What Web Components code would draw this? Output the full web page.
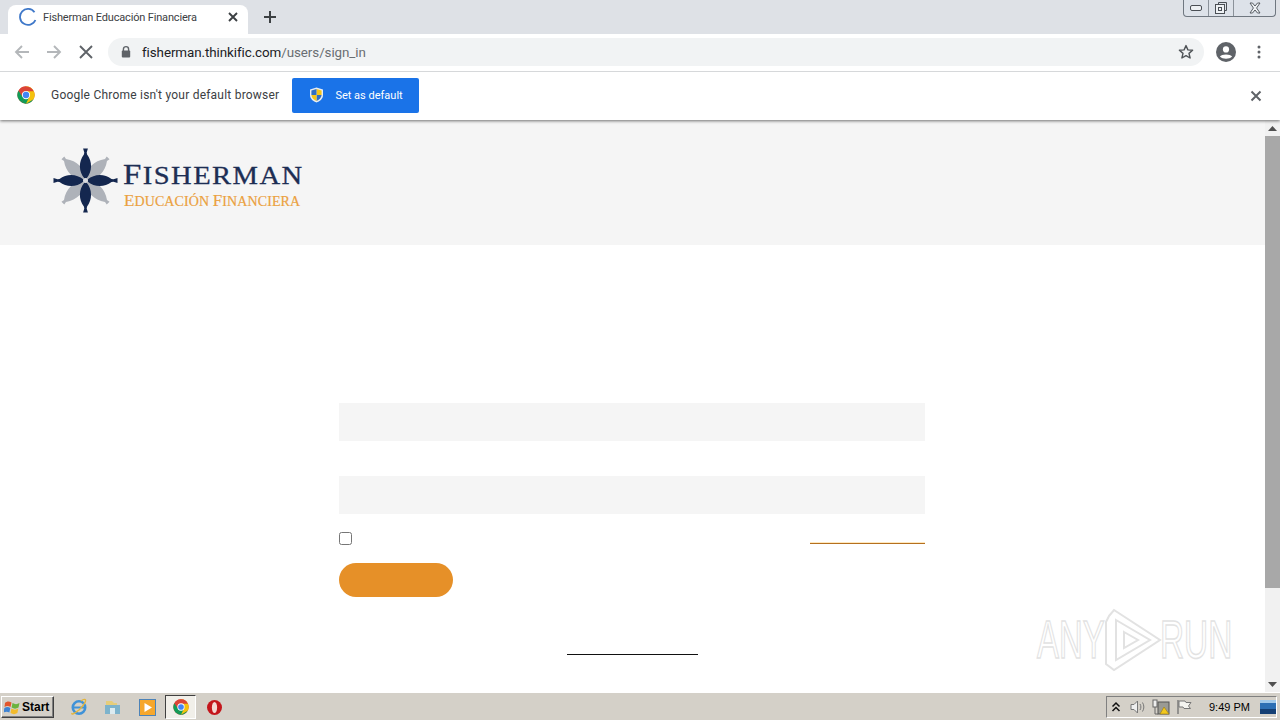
<!DOCTYPE html>
<html lang="es">
<head>
<meta charset="utf-8">
<title>Fisherman Educación Financiera</title>
<style>
  html, body { margin: 0; height: 100%; overflow: hidden; background: #fff; }
  body { font-family: Roboto, "Liberation Sans", sans-serif; }
</style>
</head>
<body>
<desktop-window>
  <chrome-tabstrip slot="chrome" title-text="Fisherman Educación Financiera"></chrome-tabstrip>
  <chrome-toolbar slot="chrome" host-name="fisherman.thinkific.com" path-name="/users/sign_in"></chrome-toolbar>
  <default-bar slot="chrome"></default-bar>
  <page-view slot="page">
    <site-header></site-header>
    <login-form></login-form>
  </page-view>
  <win-taskbar slot="taskbar"></win-taskbar>
</desktop-window>

<script>
  // small base class, each element only gives its styles and markup
  class BaseElement extends HTMLElement {
    constructor() {
      super();
      this.attachShadow({ mode: "open" });
    }
    getStyles() { return ""; }
    getMarkup() { return ""; }
    getTemplate() {
      const template = document.createElement("template");
      template.innerHTML = `<style>${this.getStyles()}</style>${this.getMarkup()}`;
      return template;
    }
    connectedCallback() {
      this.shadowRoot.appendChild(this.getTemplate().content.cloneNode(true));
    }
  }

  const chromeLogo = size => `
    <svg width="${size}" height="${size}" viewBox="0 0 48 48">
      <circle cx="24" cy="24" r="23" fill="#db4437"/>
      <path d="M24 24 L44 35.5 A23 23 0 0 1 13 44.2 Z" fill="#0f9d58"/>
      <path d="M4 12.5 L24 24 L13 44.2 A23 23 0 0 1 4 12.5 Z" fill="#0f9d58"/>
      <path d="M24 1 A23 23 0 0 1 44 35.5 L24 47 L35 24 L24 13 Z" fill="#f4c20d"/>
      <path d="M24 1 A23 23 0 0 0 4 12.5 L14 28 L24 14 L44.5 14 A23 23 0 0 0 24 1 Z" fill="#db4437"/>
      <circle cx="24" cy="24" r="11" fill="#fff"/>
      <circle cx="24" cy="24" r="8.5" fill="#4285f4"/>
    </svg>`;

  class DesktopWindow extends BaseElement {
    getStyles() {
      return `
        :host { display: flex; flex-direction: column; width: 1280px; height: 720px; overflow: hidden; }
        .chrome { display: block; flex: none; position: relative; z-index: 2; box-shadow: 0 1px 3px rgba(0,0,0,.55); }
        .page { display: flex; flex: 1; min-height: 0; }
        .taskbar { display: block; flex: none; }
      `;
    }
    getMarkup() {
      return `
        <div class="chrome"><slot name="chrome"></slot></div>
        <div class="page"><slot name="page"></slot></div>
        <div class="taskbar"><slot name="taskbar"></slot></div>
      `;
    }
  }

  class ChromeTabstrip extends BaseElement {
    getStyles() {
      return `
        :host { display: flex; height: 34px; background: #dee1e6; padding-left: 8px; position: relative; align-items: flex-end; }
        .tab { width: 240px; height: 29px; box-sizing: border-box; background: #fff; border-radius: 8px 8px 0 0;
               display: flex; align-items: center; padding: 0 9px 5px 11px; font-size: 11px; letter-spacing: -.17px; color: #3c4043; }
        .title { flex: 1; margin-left: 6px; white-space: nowrap; }
        .plus { margin: 0 0 3px 15px; align-self: flex-end; height: 28px; display: flex; align-items: center; }
        svg { display: block; flex: none; }
        .controls { position: absolute; top: 0; right: 4px; width: 93px; height: 17px; box-sizing: border-box; display: flex;
                    border: 1px solid #6f7780; border-top: 0; border-radius: 0 0 4px 4px; background: #dde2e9; }
        .controls span { display: flex; align-items: center; justify-content: center; width: 25px; flex: none; box-sizing: border-box; border-right: 1px solid #8b929a; }
        .controls span:last-child { border-right: 0; width: auto; flex: 1; }
      `;
    }
    getMarkup() {
      return `
        <div class="tab">
          <svg width="18" height="18" viewBox="0 0 18 18"><path d="M15.5 4.2 A8 8 0 1 0 16.4 12" fill="none" stroke="#3f78c9" stroke-width="1.8"/></svg>
          <span class="title">${this.getAttribute("title-text")}</span>
          <svg width="12" height="12" viewBox="0 0 12 12"><path d="M2 2 L10 10 M10 2 L2 10" stroke="#3c4043" stroke-width="1.9"/></svg>
        </div>
        <div class="plus">
          <svg width="14" height="14" viewBox="0 0 14 14"><path d="M7 1 V13 M1 7 H13" stroke="#3c4043" stroke-width="2"/></svg>
        </div>
        <div class="controls">
          <span><svg width="14" height="8" viewBox="0 0 14 8"><rect x="1.5" y="1.5" width="11" height="5" rx="1.5" fill="#eef1f4" stroke="#4a4f55"/></svg></span>
          <span><svg width="14" height="14" viewBox="0 0 14 14"><path d="M4.5 3.5 V1.5 H12.5 V9.5 H10.5" fill="none" stroke="#4a4f55"/><rect x="1.5" y="3.5" width="9" height="9" fill="#eef1f4" stroke="#4a4f55"/><rect x="4.5" y="6.5" width="3" height="3" fill="none" stroke="#4a4f55"/></svg></span>
          <span><svg width="14" height="12" viewBox="0 0 14 12"><path d="M2 1 H4.5 L7 4 L9.5 1 H12 L8.6 6 L12 11 H9.5 L7 8 L4.5 11 H2 L5.4 6 Z" fill="#eef1f4" stroke="#4a4f55" stroke-width=".9"/></svg></span>
        </div>
      `;
    }
  }

  class ChromeToolbar extends BaseElement {
    getStyles() {
      return `
        :host { display: flex; align-items: center; height: 38px; box-sizing: border-box; background: #fff; border-bottom: 1px solid #d6d8da; padding: 0 0 1px 14px; }
        svg { display: block; flex: none; }
        .nav { margin-right: 16px; }
        .nav.stop { margin-right: 14px; }
        .omnibox { flex: 1; height: 28px; border-radius: 14px; background: #f1f3f4; display: flex; align-items: center; padding: 0 10px 0 12px; margin-right: 12px; }
        .url { flex: 1; margin: 0 0 0 10px; font-size: 13.4px; letter-spacing: -.08px; color: #202124; white-space: nowrap; }
        .url span { color: #6a6e72; }
        .right { display: flex; align-items: center; gap: 21px; margin-right: 19px; }
      `;
    }
    getMarkup() {
      return `
        <svg class="nav" width="16" height="16" viewBox="0 0 16 16"><path d="M15 8 H2 M8 2 L2 8 L8 14" fill="none" stroke="#b4b7ba" stroke-width="1.9"/></svg>
        <svg class="nav" width="16" height="16" viewBox="0 0 16 16"><path d="M1 8 H14 M8 2 L14 8 L8 14" fill="none" stroke="#b4b7ba" stroke-width="1.9"/></svg>
        <svg class="nav stop" width="16" height="16" viewBox="0 0 16 16"><path d="M2 2 L14 14 M14 2 L2 14" stroke="#5f6368" stroke-width="1.9"/></svg>
        <div class="omnibox">
          <svg width="12" height="14" viewBox="0 0 12 14"><path d="M3.4 6 V4.2 A2.6 2.6 0 0 1 8.6 4.2 V6" fill="none" stroke="#5f6368" stroke-width="1.4"/><rect x="1.8" y="5.6" width="8.4" height="7" rx="1" fill="#5f6368"/></svg>
          <div class="url">${this.getAttribute("host-name")}<span>${this.getAttribute("path-name")}</span></div>
          <svg width="16" height="16" viewBox="0 0 16 16"><path d="M8 1.6 L9.9 5.9 L14.6 6.3 L11 9.4 L12.1 14 L8 11.6 L3.9 14 L5 9.4 L1.4 6.3 L6.1 5.9 Z" fill="none" stroke="#4f5357" stroke-width="1.4" stroke-linejoin="round"/></svg>
        </div>
        <div class="right">
          <svg width="20" height="20" viewBox="0 0 20 20"><circle cx="10" cy="10" r="10" fill="#5f6368"/><circle cx="10" cy="7.4" r="3.1" fill="#fff"/><path d="M3.9 14.6 C5.4 11.9 14.6 11.9 16.1 14.6 C13.4 17.6 6.6 17.6 3.9 14.6 Z" fill="#fff"/></svg>
          <svg width="4" height="14" viewBox="0 0 4 14"><circle cx="2" cy="2" r="1.5" fill="#5f6368"/><circle cx="2" cy="7" r="1.5" fill="#5f6368"/><circle cx="2" cy="12" r="1.5" fill="#5f6368"/></svg>
        </div>
      `;
    }
  }

  class DefaultBar extends BaseElement {
    getStyles() {
      return `
        :host { display: flex; align-items: center; height: 48px; box-sizing: border-box; background: #fff; padding: 0 18px 2px 17px; font-size: 12px; color: #3c4043; }
        svg { display: block; flex: none; }
        .msg { margin-left: 16px; letter-spacing: .22px; white-space: nowrap; }
        .btn { display: flex; align-items: center; margin-left: 13px; width: 127px; height: 35px; box-sizing: border-box; padding: 0 0 0 17px;
               background: #1a73e8; border-radius: 2px; color: #fff; font-size: 11px; }
        .btn span { margin-left: 11px; }
        .close { margin-left: auto; position: relative; top: 1px; }
      `;
    }
    getMarkup() {
      return `
        ${chromeLogo(18)}
        <span class="msg">Google Chrome isn't your default browser</span>
        <div class="btn">
          <svg width="15" height="16" viewBox="0 0 15 16"><path d="M7.5 .5 L14 2.5 V8 C14 12 10.5 14.5 7.5 15.5 C4.5 14.5 1 12 1 8 V2.5 Z" fill="#e8edf2"/><path d="M7.5 2 L12.6 3.6 V8 H7.5 Z" fill="#f5c518"/><path d="M7.5 2 L2.4 3.6 V8 H7.5 Z" fill="#2f6fc4"/><path d="M7.5 8 H12.6 C12.4 11 10 13 7.5 14 Z" fill="#2f6fc4"/><path d="M7.5 8 H2.4 C2.6 11 5 13 7.5 14 Z" fill="#f5c518"/></svg>
          <span>Set as default</span>
        </div>
        <svg class="close" width="12" height="12" viewBox="0 0 12 12"><path d="M1.5 1.5 L10.5 10.5 M10.5 1.5 L1.5 10.5" stroke="#5f6368" stroke-width="2"/></svg>
      `;
    }
  }

  class PageView extends BaseElement {
    getStyles() {
      return `
        :host { display: flex; flex: 1; min-width: 0; position: relative; background: #fff; }
        .content { flex: 1; min-width: 0; display: flex; flex-direction: column; overflow: hidden; }
        .scrollbar { width: 15px; flex: none; background: #f1f1f1; display: flex; flex-direction: column; align-items: center; }
        .arrow { height: 15px; flex: none; display: flex; align-items: center; justify-content: center; }
        .arrow.up { height: 16px; padding-top: 1px; box-sizing: border-box; }
        .thumb { height: 452px; width: 100%; flex: none; background: #a8a8a8; }
        .track { flex: 1; }
        .watermark { position: absolute; left: 1037px; top: 488px; display: flex; align-items: center; pointer-events: none;
                     font-family: "Liberation Sans", sans-serif; font-size: 53px; line-height: 60px; color: rgba(255,255,255,.5);
                     -webkit-text-stroke: 1.5px #e2e2e2; }
        .watermark span { display: block; transform-origin: left center; }
        .any { width: 62px; transform: scaleX(.62); }
        .run { width: 70px; transform: scaleX(.63); }
        .watermark svg { display: block; margin: 0 -3px 0 1px; }
      `;
    }
    getMarkup() {
      return `
        <div class="content"><slot></slot></div>
        <div class="scrollbar">
          <div class="arrow up"><svg width="9" height="5" viewBox="0 0 9 5"><path d="M0 5 L4.5 0 L9 5 Z" fill="#505050"/></svg></div>
          <div class="thumb"></div>
          <div class="track"></div>
          <div class="arrow"><svg width="9" height="5" viewBox="0 0 9 5"><path d="M0 0 L4.5 5 L9 0 Z" fill="#505050"/></svg></div>
        </div>
        <div class="watermark">
          <span class="any">ANY</span>
          <svg width="63" height="64" viewBox="0 0 63 64" fill="none" stroke="#e2e2e2" stroke-width="2"><path d="M9 8 L14 2 L60 32 L14 62 L6 56 L6 14 Z"/><path d="M16 12 L50 32 L16 52 Z"/><path d="M24 24 L38 32 L24 40 Z"/></svg>
          <span class="run">RUN</span>
        </div>
      `;
    }
  }

  class SiteHeader extends BaseElement {
    getStyles() {
      return `
        :host { display: flex; flex: none; align-items: flex-start; height: 125px; box-sizing: border-box; background: #f5f5f5; padding: 28px 0 0 53px; }
        svg { display: block; flex: none; }
        .words { margin: 11px 0 0 5px; font-family: "Liberation Serif", serif; white-space: nowrap; }
        .name { width: 180px; height: 30px; color: #1d2e54; font-size: 26px; line-height: 30px; letter-spacing: 1.3px; -webkit-text-stroke: .3px #1d2e54; transform: scaleX(1.1); transform-origin: left center; }
        .name b { font-weight: 400; font-size: 30px; }
        .sub { height: 18px; margin: 3px 0 0 1px; color: #eba13f; font-size: 14px; line-height: 18px; letter-spacing: .1px; -webkit-text-stroke: .2px #eba13f; }
        .sub b { font-weight: 400; font-size: 17px; }
      `;
    }
    getMarkup() {
      const navy = "M-2.4 -32 H2.4 L1.2 -28 L1.6 -26 C7 -19 7 -9 1 -2 L0 0 L-1 -2 C-7 -9 -7 -19 -1.6 -26 L-1.2 -28 Z";
      const grey = "M-2 -32 H2 L1.4 -29 C8 -20 8 -9 1 -2 L0 0 L-1 -2 C-8 -9 -8 -20 -1.4 -29 Z";
      const petal = (d, fill, deg) => `<path d="${d}" fill="${fill}" transform="rotate(${deg})"/>`;
      return `
        <svg width="65" height="65" viewBox="-32.5 -32.5 65 65">
          ${[45, 135, 225, 315].map(deg => petal(grey, "#aeb2b9", deg)).join("")}
          ${[0, 90, 180, 270].map(deg => petal(navy, "#14274f", deg)).join("")}
          <circle r="2.5" fill="#d9dbdf"/>
        </svg>
        <div class="words">
          <div class="name"><b>F</b>ISHERMAN</div>
          <div class="sub"><b>E</b>DUCACIÓN <b>F</b>INANCIERA</div>
        </div>
      `;
    }
  }

  class LoginForm extends BaseElement {
    getStyles() {
      return `
        :host { display: flex; flex-direction: column; flex: 1; box-sizing: border-box; padding: 158px 0 0 339px; width: 925px; }
        .field { height: 38px; background: #f5f5f5; flex: none; }
        .field + .field { margin-top: 35px; }
        .row { display: flex; justify-content: space-between; align-items: flex-start; height: 49px; padding-top: 18px; box-sizing: border-box; flex: none; }
        .check { width: 13px; height: 13px; box-sizing: border-box; border: 1px solid #767676; border-radius: 2.5px; background: #fff; }
        .forgot { width: 115px; height: 12px; border-bottom: 1px solid #b5701f; box-shadow: 0 1px 0 #fff, inset 0 -1px 0 #ffe9c0; box-sizing: border-box; }
        .submit { width: 114px; height: 34px; border-radius: 17px; background: #e69028; flex: none; }
        .signup { align-self: flex-start; width: 131px; height: 1px; background: #111; margin: 57px 0 0 228px; flex: none; }
      `;
    }
    getMarkup() {
      return `
        <div class="field"></div>
        <div class="field"></div>
        <div class="row"><div class="check"></div><div class="forgot"></div></div>
        <div class="submit"></div>
        <div class="signup"></div>
      `;
    }
  }

  class WinTaskbar extends BaseElement {
    getStyles() {
      return `
        :host { display: flex; align-items: center; height: 28px; box-sizing: border-box; background: #d4d0c8; border-top: 1px solid #fff; box-shadow: inset 0 1px 0 #d4d0c8; padding: 1px 3px 0 1px;
                font-family: "Liberation Sans", sans-serif; font-size: 11px; color: #000; }
        svg { display: block; flex: none; }
        .start { display: flex; align-items: center; gap: 2px; width: 53px; height: 22px; box-sizing: border-box; padding-left: 2px; font-weight: 700; font-size: 12px;
                 border: 1px solid; border-color: #fff #404040 #404040 #fff; box-shadow: inset -1px -1px 0 #808080; }
        .apps { display: flex; align-items: center; margin-left: 8px; flex: 1; }
        .app { width: 34px; display: flex; justify-content: center; }
        .app.active { height: 24px; width: 31px; margin: 0 1px; align-items: center; box-sizing: border-box; border: 1px solid; border-color: #404040 #fff #fff #404040; background: #f1efe9; }
        .tray { display: flex; align-items: center; height: 22px; box-sizing: border-box; border: 1px solid; border-color: #808080 #fff #fff #808080; padding: 0 0 0 3px; width: 171px; }
        .tray .time { margin-left: 17px; width: 51px; white-space: nowrap; }
        .gap1 { margin-left: 7px; }
        .gap2 { margin-left: 6px; }
      `;
    }
    getMarkup() {
      return `
        <div class="start">
          <svg width="16" height="15" viewBox="0 0 16 15"><path d="M1 3 C3 1 5 1 7.5 2.5 L6.5 7 C4.5 5.8 2.5 5.8 0.5 7 Z" fill="#e2562c"/><path d="M8.5 3 C11 4.5 13 4.5 15.5 3 L14.5 7.5 C12 9 10 9 7.6 7.5 Z" fill="#6ab33e"/><path d="M0.4 8 C2.5 6.8 4.5 6.8 6.3 8 L5.4 12.5 C3.5 11.4 1.5 11.4 -.5 12.5 Z" fill="#3d83d3"/><path d="M7.4 8.5 C10 10 12 10 14.3 8.5 L13.4 13 C11 14.5 9 14.5 6.5 13 Z" fill="#f2bb2c"/></svg>
          <span>Start</span>
        </div>
        <div class="apps">
          <div class="app"><svg width="18" height="18" viewBox="0 0 18 18"><circle cx="9" cy="9.5" r="6.2" fill="none" stroke="#3f92d8" stroke-width="2.6"/><path d="M3 9.5 H15" stroke="#3f92d8" stroke-width="2"/><path d="M2 15 C1 17 4 16 9 12 C14 7 17 2 15 1.5 C13.5 1 11 3 11 3" fill="none" stroke="#e4b53c" stroke-width="1.4"/></svg></div>
          <div class="app"><svg width="18" height="18" viewBox="0 0 18 18"><path d="M2 3 H8 L10 5 H13 V8 H2 Z" fill="#e6cd7a"/><rect x="1" y="7" width="15" height="9" fill="#7db3cc"/><rect x="6" y="10" width="5" height="6" fill="#dcebf0"/></svg></div>
          <div class="app"><svg width="17" height="17" viewBox="0 0 17 17"><rect x=".5" y=".5" width="16" height="16" fill="#f6a72c" stroke="#4d83b8"/><path d="M5.5 4 L13 8.5 L5.5 13 Z" fill="#fff"/></svg></div>
          <div class="app active">${chromeLogo(16)}</div>
          <div class="app"><svg width="17" height="17" viewBox="0 0 17 17"><circle cx="8.5" cy="8.5" r="7.5" fill="#c4161c"/><ellipse cx="8.5" cy="8.5" rx="2.6" ry="5.6" fill="#f4d9d4"/></svg></div>
        </div>
        <div class="tray">
          <svg width="12" height="12" viewBox="0 0 12 12"><path d="M2.5 5.5 L6 2 L9.5 5.5 M2.5 10 L6 6.5 L9.5 10" fill="none" stroke="#111" stroke-width="1.5"/></svg>
          <svg class="gap1" width="17" height="16" viewBox="0 0 17 16"><path d="M2 5.5 H5 L8.5 2 V14 L5 10.5 H2 Z" fill="#eee" stroke="#777"/><path d="M11 5 C12.2 7 12.2 9 11 11 M13.5 3.5 C15.3 6.5 15.3 9.5 13.5 12.5" fill="none" stroke="#777"/></svg>
          <svg class="gap2" width="18" height="16" viewBox="0 0 18 16"><rect x="1" y="1" width="4" height="7" fill="#eee" stroke="#666"/><rect x="6" y="3" width="11" height="12" fill="#9a9a94" stroke="#555"/><path d="M3 8 V15 H6" fill="none" stroke="#666"/><path d="M12 8 L17 15 H8 Z" fill="#f2c81c" stroke="#9b7a10" stroke-width=".6"/></svg>
          <svg class="gap2" width="16" height="16" viewBox="0 0 16 16"><path d="M2 1 V15" stroke="#777" stroke-width="1.4"/><path d="M3 2 H9 L10 3.5 H15 L12.5 7 L14.5 9.5 H8 L7 8 H3 Z" fill="#f4f4f0" stroke="#777"/></svg>
          <span class="time">9:49 PM</span>
          <svg width="16" height="14" viewBox="0 0 16 14"><rect width="16" height="14" fill="#2d6fb4"/><rect y="9" width="16" height="5" fill="#143f74"/><path d="M0 0 H16 V3 H0 Z" fill="#a2c9ea"/></svg>
        </div>
      `;
    }
  }

  customElements.define("desktop-window", DesktopWindow);
  customElements.define("chrome-tabstrip", ChromeTabstrip);
  customElements.define("chrome-toolbar", ChromeToolbar);
  customElements.define("default-bar", DefaultBar);
  customElements.define("page-view", PageView);
  customElements.define("site-header", SiteHeader);
  customElements.define("login-form", LoginForm);
  customElements.define("win-taskbar", WinTaskbar);
</script>
</body>
</html>
